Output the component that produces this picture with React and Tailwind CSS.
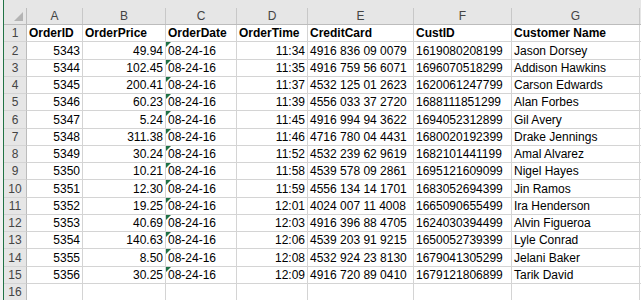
const COLS = ['A', 'B', 'C', 'D', 'E', 'F', 'G']
const WIDTHS = ['w-[56px]', 'w-[83px]', 'w-[71px]', 'w-[71px]', 'w-[106px]', 'w-[98px]', 'w-[128px]']
const HEADERS = ['OrderID', 'OrderPrice', 'OrderDate', 'OrderTime', 'CreditCard', 'CustID', 'Customer Name']

const ROWS = [
  ['5343', '49.94', '11:34', '4916 836 09 0079', '1619080208199', 'Jason Dorsey'],
  ['5344', '102.45', '11:35', '4916 759 56 6071', '1696070518299', 'Addison Hawkins'],
  ['5345', '200.41', '11:37', '4532 125 01 2623', '1620061247799', 'Carson Edwards'],
  ['5346', '60.23', '11:39', '4556 033 37 2720', '1688111851299', 'Alan Forbes'],
  ['5347', '5.24', '11:45', '4916 994 94 3622', '1694052312899', 'Gil Avery'],
  ['5348', '311.38', '11:46', '4716 780 04 4431', '1680020192399', 'Drake Jennings'],
  ['5349', '30.24', '11:52', '4532 239 62 9619', '1682101441199', 'Amal Alvarez'],
  ['5350', '10.21', '11:58', '4539 578 09 2861', '1695121609099', 'Nigel Hayes'],
  ['5351', '12.30', '11:59', '4556 134 14 1701', '1683052694399', 'Jin Ramos'],
  ['5352', '19.25', '12:01', '4024 007 11 4008', '1665090655499', 'Ira Henderson'],
  ['5353', '40.69', '12:03', '4916 396 88 4705', '1624030394499', 'Alvin Figueroa'],
  ['5354', '140.63', '12:06', '4539 203 91 9215', '1650052739399', 'Lyle Conrad'],
  ['5355', '8.50', '12:08', '4532 924 23 8130', '1679041305299', 'Jelani Baker'],
  ['5356', '30.25', '12:09', '4916 720 89 0410', '1679121806899', 'Tarik David'],
]

function RowHead({ n }) {
  return (
    <div className="w-[23px] shrink-0 flex items-end justify-center pb-[2px] bg-[#e6e6e6] border-r border-[#bcbcbc] text-[#444] border-b border-b-[#d4d4d4]">
      {n}
    </div>
  )
}

function Cell({ w, right, flag, bold, children }) {
  return (
    <div
      className={`${w} shrink-0 relative flex items-end pb-[2px] overflow-hidden whitespace-nowrap px-[2px] border-r border-b border-[#d4d4d4] ${right ? 'justify-end' : ''} ${bold ? 'font-bold' : ''}`}
    >
      {flag && (
        <svg className="absolute left-0 top-0" width="5" height="5" viewBox="0 0 5 5">
          <path d="M0 0H5L0 5Z" fill="#1e7145" />
        </svg>
      )}
      {children}
    </div>
  )
}

export default function App() {
  return (
    <div className="w-[641px] h-[300px] overflow-hidden flex bg-white text-[12px] leading-none text-black" style={{ fontFamily: '"Liberation Sans", Arial, sans-serif' }}>
      <div className="w-[3px] shrink-0 bg-[#f2f2f2]" />
      <div className="w-px shrink-0 bg-[#217346]" />
      <div className="flex-1 flex flex-col">
        <div className="h-[8px] shrink-0 bg-[#e6e6e6]" />
        {/* column letters */}
        <div className="h-[17px] shrink-0 flex bg-[#e6e6e6] border-b border-[#bcbcbc] text-[#444]">
          <div className="w-[23px] shrink-0 flex items-end justify-end pr-[3px] pb-[3px] border-r border-[#bcbcbc]">
            <svg width="9" height="9" viewBox="0 0 9 9">
              <path d="M9 0V9H0Z" fill="#b4b4b4" />
            </svg>
          </div>
          {COLS.map((c, i) => (
            <div key={c} className={`${WIDTHS[i]} shrink-0 flex items-center justify-center border-r border-[#c8c8c8]`}>
              {c}
            </div>
          ))}
          <div className="flex-1" />
        </div>

        <div className="h-[17.25px] shrink-0 flex">
          <RowHead n={1} />
          {HEADERS.map((h, i) => (
            <Cell key={h} w={WIDTHS[i]} bold>{h}</Cell>
          ))}
          <div className="flex-1 border-b border-[#d4d4d4]" />
        </div>

        {ROWS.map((r, idx) => (
          <div key={r[0]} className="h-[17.25px] shrink-0 flex">
            <RowHead n={idx + 2} />
            <Cell w={WIDTHS[0]} right>{r[0]}</Cell>
            <Cell w={WIDTHS[1]} right>{r[1]}</Cell>
            <Cell w={WIDTHS[2]} flag>08-24-16</Cell>
            <Cell w={WIDTHS[3]} right>{r[2]}</Cell>
            <Cell w={WIDTHS[4]}>{r[3]}</Cell>
            <Cell w={WIDTHS[5]}>{r[4]}</Cell>
            <Cell w={WIDTHS[6]}>{r[5]}</Cell>
            <div className="flex-1 border-b border-[#d4d4d4]" />
          </div>
        ))}

        <div className="h-[17.25px] shrink-0 flex">
          <RowHead n={16} />
          {WIDTHS.map((w, i) => (
            <Cell key={i} w={w} />
          ))}
          <div className="flex-1" />
        </div>
      </div>
    </div>
  )
}
